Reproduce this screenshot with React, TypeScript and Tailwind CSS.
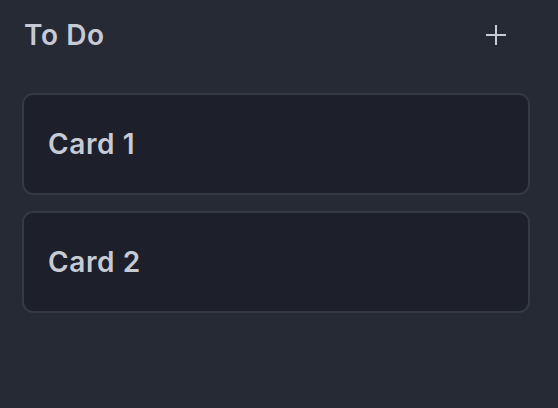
const cards = ["Card 1", "Card 2"];

export default function App() {
  return (
    <div
      className="h-[408px] w-[558px] bg-[#262a35] text-[#c6cad4]"
      style={{ fontFamily: "Inter, 'Noto Sans', sans-serif" }}
    >
      <div className="flex h-[70px] items-center justify-between pl-[24px] pr-[52px]">
        <h2 className="text-[28px] font-semibold tracking-[0.6px]">To Do</h2>
        <svg width="20" height="20" viewBox="0 0 20 20" className="text-[#c6cad4]">
          <path d="M10 0v20M0 10h20" stroke="currentColor" strokeWidth="2" />
        </svg>
      </div>
      <div className="mt-[23px] flex flex-col gap-[16px] pl-[22px]">
        {cards.map((card) => (
          <div
            key={card}
            className="flex h-[102px] w-[508px] items-center rounded-[11px] border-2 border-[#353945] bg-[#1d202a] pl-[24px]"
          >
            <span className="text-[28px] font-semibold tracking-[0.6px]">{card}</span>
          </div>
        ))}
      </div>
    </div>
  );
}
